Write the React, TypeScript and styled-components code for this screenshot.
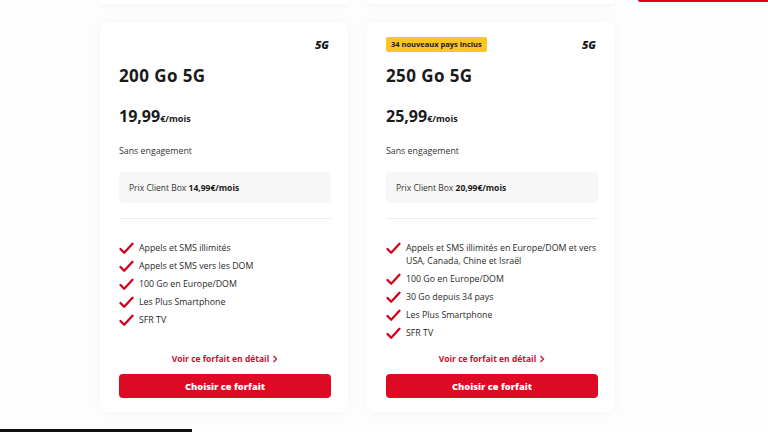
import styled, { createGlobalStyle } from "styled-components";

const GlobalStyle = createGlobalStyle`
  html, body {
    margin: 0;
    padding: 0;
    background: #fdfdfd;
    font-family: "Open Sans", "Liberation Sans", sans-serif;
    color: #1a1a1a;
  }
`;

const Page = styled.div`
  position: relative;
  width: 768px;
  height: 432px;
  overflow: hidden;
  background: #fdfdfd;
`;

const PrevRow = styled.div`
  display: grid;
  grid-template-columns: 248px 248px;
  column-gap: 19px;
  padding-left: 100px;
  height: 4px;
`;

const PrevCard = styled.div`
  background: #fff;
  box-shadow: 0 2px 4px rgba(0, 0, 0, 0.04);
  border-radius: 0 0 8px 8px;
`;

const Grid = styled.div`
  display: grid;
  grid-template-columns: 248px 248px;
  column-gap: 19px;
  padding: 18px 0 0 100px;
`;

const Card = styled.div`
  background: #fff;
  border-radius: 8px;
  box-shadow: 0 0 10px rgba(0, 0, 0, 0.035);
  padding: 14px 17px 14px 19px;
  height: 390px;
  box-sizing: border-box;
  display: flex;
  flex-direction: column;
`;

const TopRow = styled.div`
  display: flex;
  justify-content: space-between;
  align-items: center;
  height: 16px;
  margin-bottom: 13px;
`;

const Badge = styled.span`
  background: #fbc523;
  color: #1a1a1a;
  font-size: 7.5px;
  font-weight: 700;
  padding: 2px 5px;
  border-radius: 2px;
  line-height: 11px;
`;

const NetTag = styled.span`
  margin-left: auto;
  margin-right: 2px;
  font-size: 11px;
  font-weight: 800;
  font-style: italic;
`;

const Title = styled.h2`
  margin: 0 0 19px;
  font-size: 17px;
  font-weight: 700;
  line-height: 22px;
  letter-spacing: 0.4px;
`;

const Price = styled.div`
  font-size: 16px;
  font-weight: 700;
  line-height: 20px;
  margin-bottom: 16px;

  small {
    font-size: 9px;
    font-weight: 700;
  }
`;

const Commitment = styled.div`
  font-size: 8.8px;
  color: #333;
  line-height: 12px;
  margin-bottom: 15px;
`;

const ClientBox = styled.div`
  background: #f7f7f7;
  border-radius: 4px;
  padding: 10px 10px;
  font-size: 8.5px;
  line-height: 11px;
  color: #333;

  b {
    color: #1a1a1a;
    font-weight: 700;
  }
`;

const Divider = styled.hr`
  border: 0;
  border-top: 1px solid #ececec;
  margin: 15px 0 23px;
`;

const Features = styled.ul`
  list-style: none;
  margin: 0;
  padding: 0;
  display: flex;
  flex-direction: column;
  gap: 5px;
`;

const Feature = styled.li`
  display: grid;
  grid-template-columns: 15px 1fr;
  column-gap: 5px;
  align-items: start;
  font-size: 8.8px;
  line-height: 13px;
  color: #2a2a2a;
`;

const Footer = styled.div`
  margin-top: auto;
  display: flex;
  flex-direction: column;
  align-items: stretch;
  gap: 9px;
`;

const DetailLink = styled.a`
  align-self: center;
  display: flex;
  align-items: center;
  gap: 3px;
  color: #c8102e;
  font-size: 8.5px;
  font-weight: 700;
  text-decoration: none;
  line-height: 12px;
`;

const ChooseButton = styled.button`
  height: 24px;
  border: 0;
  border-radius: 4px;
  background: #de0a24;
  color: #fff;
  font-family: inherit;
  font-size: 9.3px;
  font-weight: 800;
`;

const TopAccent = styled.div`
  position: absolute;
  top: 0;
  left: 638px;
  width: 130px;
  height: 2px;
  background: #e0001c;
  border-radius: 0 0 0 2px;
`;

const ProgressBar = styled.div`
  position: absolute;
  bottom: 0;
  left: 0;
  width: 192px;
  height: 3px;
  background: #111;
`;

const Check = () => (
  <svg width="15" height="13" viewBox="0 0 15 13">
    <path
      d="M1.5 7 L5.2 10.8 L13.5 1.8"
      fill="none"
      stroke="#d3001c"
      strokeWidth="2.3"
      strokeLinecap="round"
      strokeLinejoin="round"
    />
  </svg>
);

const Chevron = () => (
  <svg width="6" height="8" viewBox="0 0 6 8">
    <path
      d="M1.5 1 L4.5 4 L1.5 7"
      fill="none"
      stroke="#c8102e"
      strokeWidth="1.3"
    />
  </svg>
);

type Plan = {
  name: string;
  price: string;
  boxPrice: string;
  badge?: string;
  features: string[];
};

const plans: Plan[] = [
  {
    name: "200 Go 5G",
    price: "19,99",
    boxPrice: "14,99€/mois",
    features: [
      "Appels et SMS illimités",
      "Appels et SMS vers les DOM",
      "100 Go en Europe/DOM",
      "Les Plus Smartphone",
      "SFR TV",
    ],
  },
  {
    name: "250 Go 5G",
    price: "25,99",
    boxPrice: "20,99€/mois",
    badge: "34 nouveaux pays inclus",
    features: [
      "Appels et SMS illimités en Europe/DOM et vers USA, Canada, Chine et Israël",
      "100 Go en Europe/DOM",
      "30 Go depuis 34 pays",
      "Les Plus Smartphone",
      "SFR TV",
    ],
  },
];

const App = () => (
  <Page>
    <GlobalStyle />
    <PrevRow>
      <PrevCard />
      <PrevCard />
    </PrevRow>
    <Grid>
      {plans.map((plan) => (
        <Card key={plan.name}>
          <TopRow>
            {plan.badge && <Badge>{plan.badge}</Badge>}
            <NetTag>5G</NetTag>
          </TopRow>
          <Title>{plan.name}</Title>
          <Price>
            {plan.price}
            <small>€/mois</small>
          </Price>
          <Commitment>Sans engagement</Commitment>
          <ClientBox>
            Prix Client Box <b>{plan.boxPrice}</b>
          </ClientBox>
          <Divider />
          <Features>
            {plan.features.map((f) => (
              <Feature key={f}>
                <Check />
                <span>{f}</span>
              </Feature>
            ))}
          </Features>
          <Footer>
            <DetailLink href="#">
              Voir ce forfait en détail <Chevron />
            </DetailLink>
            <ChooseButton>Choisir ce forfait</ChooseButton>
          </Footer>
        </Card>
      ))}
    </Grid>
    <TopAccent />
    <ProgressBar />
  </Page>
);

export default App;
